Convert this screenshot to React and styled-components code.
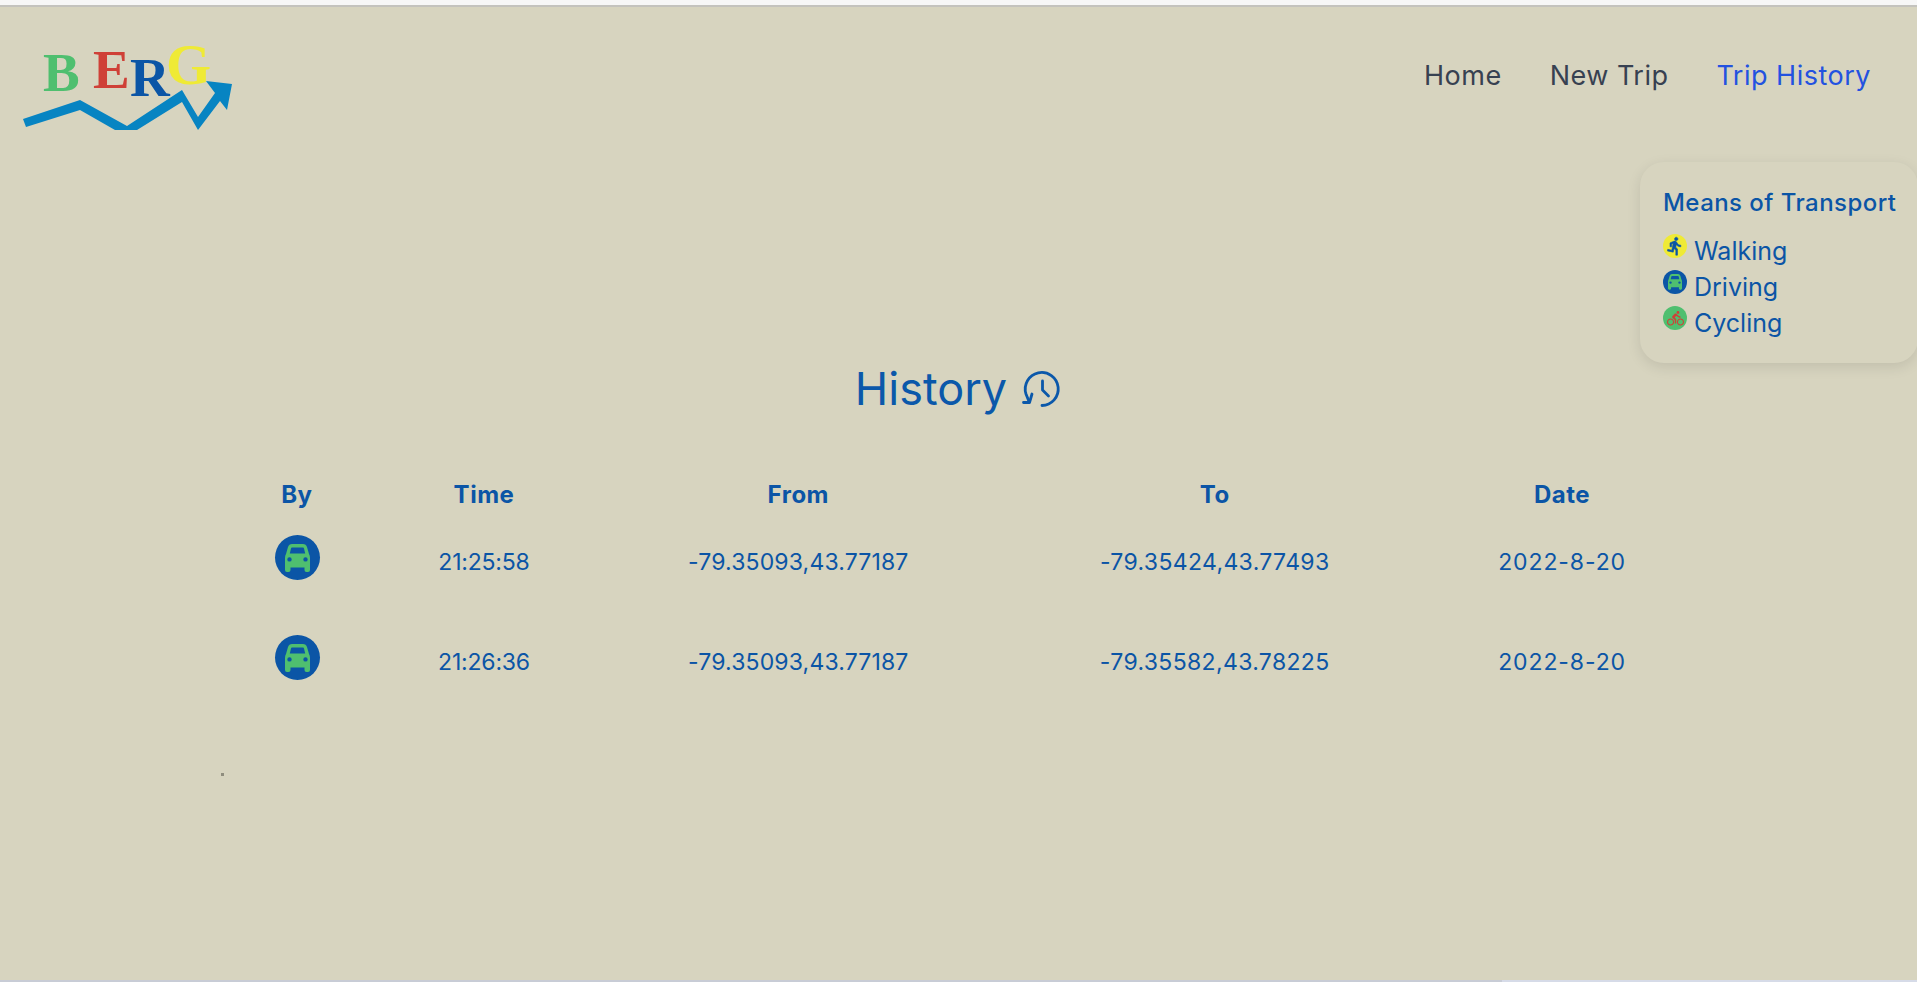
import React from "react";
import styled, { createGlobalStyle } from "styled-components";

const GlobalStyle = createGlobalStyle`
  html, body {
    margin: 0;
    padding: 0;
    background: #d7d4bf;
  }
  body {
    font-family: Inter, "Open Sans", sans-serif;
  }
`;

const Page = styled.div`
  width: 1917px;
  height: 982px;
  overflow: hidden;
  position: relative;
  display: flex;
  flex-direction: column;
  background: #d7d4bf;
`;
const TopStrip = styled.div`
  height: 5px;
  flex: none;
  background: #f7f7f7;
  border-bottom: 2px solid #c4c3be;
`;
const Main = styled.div`
  flex: 1;
  display: flex;
  flex-direction: column;
  position: relative;
`;
const Header = styled.header`
  display: flex;
  justify-content: space-between;
  align-items: flex-start;
  padding: 20px 46px 0 20px;
  height: 150px;
  box-sizing: border-box;
`;
const Nav = styled.nav`
  display: flex;
  gap: 48px;
  padding-top: 33px;
`;
const NavLink = styled.a`
  font-size: 27px;
  line-height: 32px;
  letter-spacing: 0.5px;
  font-weight: 400;
  color: ${(p) => (p.$active ? "#2352e0" : "#374151")};
`;
const Legend = styled.aside`
  position: absolute;
  top: 155px;
  right: -1px;
  width: 278px;
  height: 201px;
  box-sizing: border-box;
  padding: 24px 0 0 23px;
  border-radius: 24px;
  background: #d7d4bf;
  box-shadow: 0 4px 14px rgba(0, 0, 0, 0.1);
  color: #0b55a6;
`;
const LegendTitle = styled.div`
  font-size: 24px;
  line-height: 34px;
  letter-spacing: 0.45px;
  font-weight: 500;
  margin-bottom: 13px;
`;
const LegendRow = styled.div`
  display: flex;
  align-items: flex-start;
  gap: 7px;
  height: 36px;
  font-size: 25px;
  line-height: 36px;
`;
const Badge = styled.span`
  flex: none;
  display: flex;
  align-items: center;
  justify-content: center;
  width: ${(p) => p.$size}px;
  height: ${(p) => p.$size}px;
  border-radius: 50%;
  background: ${(p) => p.$bg};
  color: ${(p) => p.$fg};
`;
const LegendBadge = styled(Badge)`
  margin-top: 1px;
`;
const Title = styled.h1`
  display: flex;
  align-items: center;
  justify-content: center;
  gap: 9px;
  margin: 198px 0 0;
  height: 66px;
  font-size: 45px;
  font-weight: 400;
  color: #0b58aa;
`;
const Table = styled.table`
  width: 80%;
  margin: 48px auto 0;
  table-layout: fixed;
  border-collapse: collapse;
  color: #0b55a6;
  text-align: center;
`;
const Th = styled.th`
  width: ${(p) => p.$w}px;
  height: 50px;
  padding: 0;
  font-size: 24px;
  letter-spacing: 0.5px;
  font-weight: 700;
`;
const Td = styled.td`
  height: 100px;
  padding: 0;
  font-size: 23px;
  letter-spacing: ${(p) => p.$spacing || 0.15}px;
  font-weight: 400;
  vertical-align: top;
  line-height: 86px;
`;
const IconCell = styled(Td)`
  height: 84px;
  line-height: 0;
  padding: 16px 0 0 2px;
  > span {
    margin: 0 auto;
  }
`;
const Speck = styled.span`
  position: absolute;
  left: 221px;
  top: 766px;
  width: 3px;
  height: 3px;
  background: #8f8d7e;
`;
const BottomStrip = styled.div`
  position: absolute;
  bottom: 0;
  left: 0;
  right: 0;
  height: 2px;
  background: linear-gradient(to right, #c8ccd6 1502px, #d6dbe8 1502px);
`;

const CarIcon = ({ width }) => (
  <svg width={width} height={(width * 28) / 25} viewBox="0 0 25 28" fill="currentColor">
    <path
      fillRule="evenodd"
      d="M7 0H18Q21 0 22 3L24 10Q25 11.5 25 14V26Q25 28 23 28H21.5Q19.5 28 19.5 26V23.5H5.5V26Q5.5 28 3.5 28H2Q0 28 0 26V14Q0 11.5 1 10L3 3Q4 0 7 0ZM7 3.5Q6.2 3.5 6 4.5L4.8 9.5H20.2L19 4.5Q18.8 3.5 18 3.5ZM4.5 13.2A2.2 2.2 0 1 0 4.5 17.6A2.2 2.2 0 1 0 4.5 13.2ZM20.5 13.2A2.2 2.2 0 1 0 20.5 17.6A2.2 2.2 0 1 0 20.5 13.2Z"
    />
  </svg>
);

const WalkIcon = ({ size }) => (
  <svg width={size} height={size} viewBox="0 0 24 24" fill="currentColor" stroke="currentColor" strokeWidth="0.7">
    <path d="M13.49 5.48c1.1 0 2-.9 2-2s-.9-2-2-2-2 .9-2 2 .9 2 2 2zm-3.6 13.9l1-4.4 2.1 2v6h2v-7.5l-2.1-2 .6-3c1.3 1.5 3.3 2.5 5.5 2.5v-2c-1.9 0-3.5-1-4.3-2.4l-1-1.6c-.4-.6-1-1-1.7-1-.3 0-.5.1-.8.1l-5.2 2.2v4.7h2v-3.4l1.8-.7-1.6 8.1-4.9-1-.4 2 7 1.4z" />
  </svg>
);

const BikeIcon = ({ size }) => (
  <svg width={size} height={size} viewBox="0 0 24 24" fill="currentColor">
    <path d="M15.5 5.5c1.1 0 2-.9 2-2s-.9-2-2-2-2 .9-2 2 .9 2 2 2zM5 12c-2.8 0-5 2.2-5 5s2.2 5 5 5 5-2.2 5-5-2.2-5-5-5zm0 8.5c-1.9 0-3.5-1.6-3.5-3.5s1.6-3.5 3.5-3.5 3.5 1.6 3.5 3.5-1.6 3.5-3.5 3.5zm5.8-10l2.4-2.4.8.8c1.3 1.3 3 2.1 5.1 2.1V9c-1.5 0-2.7-.6-3.6-1.5l-1.9-1.9c-.5-.4-1-.6-1.6-.6s-1.1.2-1.4.6L7.8 8.4c-.4.4-.6.9-.6 1.4 0 .6.2 1.1.6 1.4L11 14v5h2v-6.2l-2.2-2.3zM19 12c-2.8 0-5 2.2-5 5s2.2 5 5 5 5-2.2 5-5-2.2-5-5-5zm0 8.5c-1.9 0-3.5-1.6-3.5-3.5s1.6-3.5 3.5-3.5 3.5 1.6 3.5 3.5-1.6 3.5-3.5 3.5z" />
  </svg>
);

const HistoryIcon = () => (
  <svg width="46" height="50" viewBox="0 0 46 50" fill="none" stroke="#0b58aa" strokeWidth="2.8" strokeLinecap="round" strokeLinejoin="round">
    <path d="M26 42.5 A16.5 16.5 0 1 0 10 31 L13 38.5" />
    <path d="M7.5 39.5 H13.5 L16 31" />
    <path d="M26.5 18 V27 L32.5 33" />
  </svg>
);

const Logo = () => (
  <svg width="214" height="114" viewBox="0 -12 214 114" style={{ display: "block" }}>
    <g fontFamily="'Liberation Serif', serif" fontWeight="700">
      <text x="23" y="52" fontSize="55" fill="#4fbf6f">B</text>
      <text x="73" y="49" fontSize="55" fill="#cf4037">E</text>
      <text x="110" y="57" fontSize="55" fill="#0b55a6">R</text>
      <text x="146" y="45" fontSize="58" fill="#efea35">G</text>
    </g>
    <polygon
      points="3,80 60,61 107,87 162,51 178,78 195,54 186,42 212,45 207,71 200,62 178,91 162,63 117,91 95,91 60,71 6,88"
      fill="#0784c2"
    />
  </svg>
);

const trips = [
  { time: "21:25:58", from: "-79.35093,43.77187", to: "-79.35424,43.77493", date: "2022-8-20" },
  { time: "21:26:36", from: "-79.35093,43.77187", to: "-79.35582,43.78225", date: "2022-8-20" },
];

const App = () => {
  return (
    <Page>
      <GlobalStyle />
      <TopStrip />
      <Main>
        <Header>
          <Logo />
          <Nav>
            <NavLink>Home</NavLink>
            <NavLink>New Trip</NavLink>
            <NavLink $active>Trip History</NavLink>
          </Nav>
        </Header>
        <Legend>
          <LegendTitle>Means of Transport</LegendTitle>
          <LegendRow>
            <LegendBadge $size={24} $bg="#efea35" $fg="#0b55a6"><WalkIcon size={20} /></LegendBadge>
            Walking
          </LegendRow>
          <LegendRow>
            <LegendBadge $size={24} $bg="#0b55a6" $fg="#4fbf6f"><CarIcon width={14} /></LegendBadge>
            Driving
          </LegendRow>
          <LegendRow>
            <LegendBadge $size={24} $bg="#4fbf6f" $fg="#cf4037"><BikeIcon size={17} /></LegendBadge>
            Cycling
          </LegendRow>
        </Legend>
        <Title>
          History <HistoryIcon />
        </Title>
        <Table>
          <thead>
            <tr>
              <Th $w={210}>By</Th>
              <Th $w={164}>Time</Th>
              <Th $w={464}>From</Th>
              <Th $w={368}>To</Th>
              <Th $w={326}>Date</Th>
            </tr>
          </thead>
          <tbody>
            {trips.map((t) => (
              <tr key={t.time}>
                <IconCell>
                  <Badge $size={45} $bg="#0b55a6" $fg="#4fbf6f"><CarIcon width={25} /></Badge>
                </IconCell>
                <Td $spacing={-0.2}>{t.time}</Td>
                <Td>{t.from}</Td>
                <Td $spacing={0.35}>{t.to}</Td>
                <Td $spacing={0.9}>{t.date}</Td>
              </tr>
            ))}
          </tbody>
        </Table>
        <Speck />
      </Main>
      <BottomStrip />
    </Page>
  );
};

export default App;
